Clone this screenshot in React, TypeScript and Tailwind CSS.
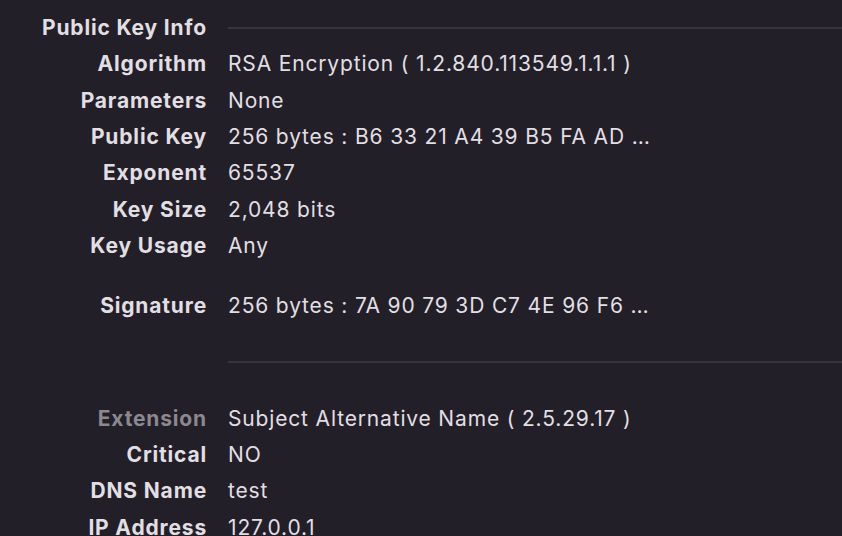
const rows1: [string, React.ReactNode][] = [
  ['Algorithm', 'RSA Encryption ( 1.2.840.113549.1.1.1 )'],
  ['Parameters', 'None'],
  ['Public Key', <>256 bytes : B6 33 21 A4 39 B5 FA AD{' '}<span className="tracking-[-0.03em]">…</span></>],
  ['Exponent', '65537'],
  ['Key Size', '2,048 bits'],
  ['Key Usage', 'Any'],
];

const rows2: [string, string][] = [
  ['Critical', 'NO'],
  ['DNS Name', 'test'],
  ['IP Address', '127.0.0.1'],
];

const Row = ({ label, value, dim = false }: { label: string; value: React.ReactNode; dim?: boolean }) => (
  <>
    <div className={`h-[36.33px] flex items-center justify-end font-bold whitespace-nowrap ${dim ? 'text-[#8b8890]' : 'text-[#e2dfe4]'}`}>
      {label}
    </div>
    <div className="h-[36.33px] flex items-center whitespace-pre text-[#e2dfe4]">{value}</div>
  </>
);

export default function App() {
  return (
    <div
      className="w-[842px] h-[536px] overflow-hidden bg-[#231f28] pt-[10px] text-[21px] tracking-[0.04em]"
      style={{ fontFamily: 'Inter, "Noto Sans", sans-serif' }}
    >
      <div className="grid grid-cols-[207px_1fr] gap-x-[21px]">
        <div className="h-9 flex items-center justify-end font-bold text-[#e2dfe4] whitespace-nowrap">Public Key Info</div>
        <div className="h-9 flex items-center">
          <div className="w-full h-[2px] bg-[#38343d]" />
        </div>
        {rows1.map(([l, v]) => (
          <Row key={l} label={l} value={v} />
        ))}
        <div className="h-6 col-span-2" />
        <Row
          label="Signature"
          value={<>256 bytes : 7A 90 79 3D C7 4E 96 F6{' '}<span className="tracking-[-0.03em]">…</span></>}
        />
        <div className="h-[76px]" />
        <div className="h-[76px] flex items-center">
          <div className="w-full h-[2px] bg-[#38343d]" />
        </div>
        <Row label="Extension" value="Subject Alternative Name ( 2.5.29.17 )" dim />
        {rows2.map(([l, v]) => (
          <Row key={l} label={l} value={v} />
        ))}
      </div>
    </div>
  );
}
